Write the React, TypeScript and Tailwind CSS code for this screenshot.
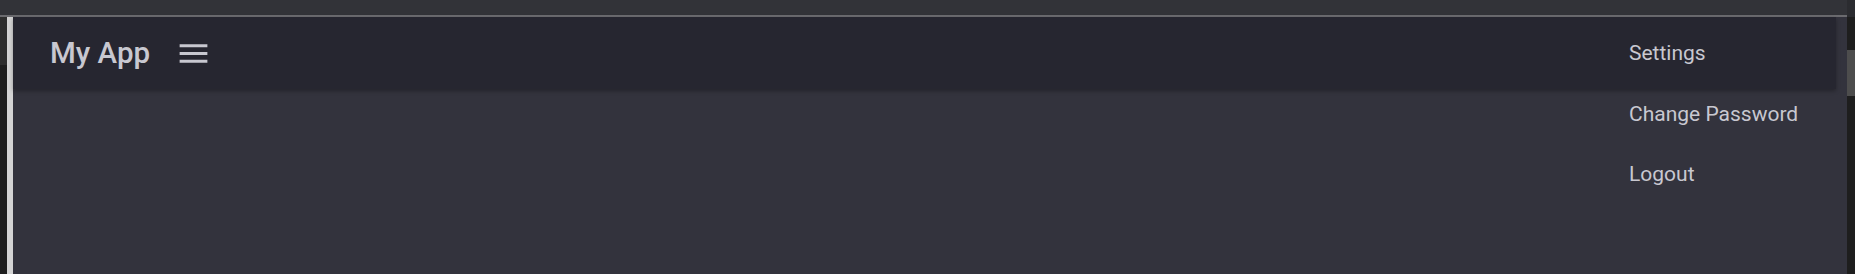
export default function App() {
  const links = ["Settings", "Change Password", "Logout"];

  return (
    <div className="flex h-[274px] w-[1855px] overflow-hidden bg-[#1e1e1e] font-['Roboto',sans-serif]">
      <div className="flex w-[1847px] flex-col">
        <div className="h-[15px] bg-[#323338]" />
        <div className="h-[2px] bg-[#6b6b6f]" />
        <div className="flex flex-1">
          <div className="flex w-[7px] flex-col">
            <div className="h-[48px] bg-[#2e2e2e]" />
            <div className="flex-1 bg-[#1e1e1e]" />
          </div>
          <div className="w-[6px] bg-[#d4d4d4]" />

          <div className="relative flex-1 bg-[#33333d]">
            <header className="mr-[11px] flex h-[72px] items-center bg-[#262630] pl-[37px] shadow-[0_2px_4px_rgba(0,0,0,0.3)]">
              <span className="text-[29.5px] font-medium text-[#c8c8d0]">My App</span>
              <button type="button" className="ml-[25px] text-[#c8c8d0]">
                <svg width="37" height="37" viewBox="0 0 24 24" fill="currentColor">
                  <path d="M3 18h18v-2H3v2zm0-5h18v-2H3v2zm0-7v2h18V6H3z" />
                </svg>
              </button>
            </header>

            <ul className="absolute left-[1616px] top-0 pt-[6px]">
              {links.map((l) => (
                <li key={l} className="text-[21px] leading-[60.5px] whitespace-nowrap text-[#c8c8d0]">
                  {l}
                </li>
              ))}
            </ul>
          </div>
        </div>
      </div>

      <div className="flex w-[8px] flex-col">
        <div className="h-[17px] bg-[#2b2c30]" />
        <div className="h-[33px]" />
        <div className="h-[46px] bg-[#4d4d4d]" />
      </div>
    </div>
  );
}
